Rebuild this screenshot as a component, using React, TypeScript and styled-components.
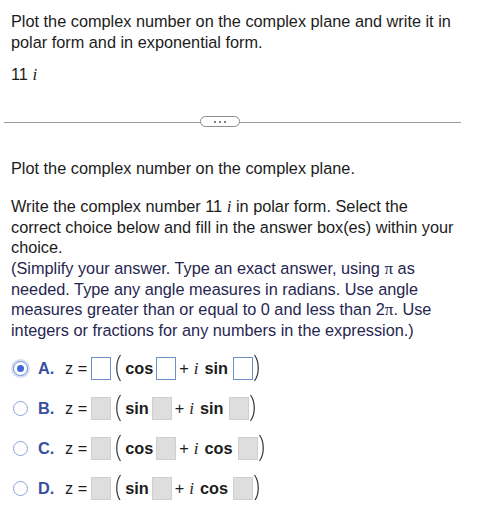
import React from "react";
import styled, { createGlobalStyle } from "styled-components";

const GlobalStyle = createGlobalStyle`
    body {
        margin: 0;
        background: #ffffff;
        font-family: "Liberation Sans", Arial, sans-serif;
        color: #1c1c1c;
    }
`;

const Page = styled.div`
    width: 457px;
    padding: 11px 0 0 4px;
`;

const Text = styled.p`
    margin: 0;
    padding-left: 7px;
    font-size: 16.3px;
    line-height: 20.6px;
`;

const Question = styled(Text)`
    line-height: 21px;
    margin-bottom: 11px;
`;

const Number = styled(Text)`
    margin-bottom: 31px;
`;

const Hint = styled(Text)`
    color: #262650;
`;

const Italic = styled.span`
    font-family: "Liberation Serif", "Times New Roman", serif;
    font-style: italic;
    font-size: 17px;
    line-height: 1;
`;

const Pi = styled.span`
    font-family: "Liberation Serif", "Times New Roman", serif;
    font-size: 17px;
    line-height: 1;
`;

const Divider = styled.div`
    position: relative;
    height: 12px;
    display: flex;
    align-items: center;
    justify-content: center;
    margin-bottom: 30px;
    &::before {
        content: "";
        position: absolute;
        left: 0;
        right: 0;
        top: 50%;
        border-top: 1px solid #9a9a9a;
    }
`;

const Pill = styled.div`
    position: relative;
    margin-left: -25px;
    width: 38px;
    height: 9px;
    border: 1px solid #8a8a8a;
    border-radius: 6px;
    background: #fff;
    display: flex;
    align-items: center;
    justify-content: center;
    gap: 3px;
`;

const Dot = styled.span`
    width: 2px;
    height: 2px;
    background: #555;
    border-radius: 50%;
`;

const Section = styled(Text)`
    margin-bottom: 18px;
`;

const Choices = styled.div`
    margin-top: 16px;
    padding-left: 9px;
    display: flex;
    flex-direction: column;
    gap: 16px;
`;

const Choice = styled.div`
    display: flex;
    align-items: center;
    height: 24px;
    font-size: 16.3px;
`;

const Radio = styled.span<{ $on?: boolean }>`
    box-sizing: border-box;
    width: 15px;
    height: 15px;
    border-radius: 50%;
    border: ${(p) => (p.$on ? "1.5px solid #6f8fd6" : "1.5px solid #8ea4d8")};
    box-shadow: ${(p) => (p.$on ? "0 0 0 2px #d5def3" : "none")};
    background: #fff;
    display: flex;
    align-items: center;
    justify-content: center;
    margin-right: 10px;
    &::after {
        content: "";
        display: ${(p) => (p.$on ? "block" : "none")};
        width: 7px;
        height: 7px;
        border-radius: 50%;
        background: #3f69d2;
    }
`;

const Letter = styled.span`
    font-weight: bold;
    color: #3a4e9e;
    width: 27px;
`;

const Eq = styled.span`
    margin-right: 4px;
`;

const Box = styled.span<{ $on?: boolean }>`
    box-sizing: border-box;
    display: inline-block;
    width: 20px;
    height: 23px;
    border: 1px solid ${(p) => (p.$on ? "#6f8fc9" : "#cfcfcf")};
    background: ${(p) => (p.$on ? "#fff" : "#dedede")};
`;

const Fn = styled.span<{ $gap?: number; $end?: number }>`
    font-weight: bold;
    margin: 0 ${(p) => p.$end ?? 3}px 0 ${(p) => p.$gap ?? 2}px;
`;

const Plus = styled.span`
    margin: 0 5px 0 3px;
`;

const Paren = styled.svg`
    width: 8px;
    height: 28px;
`;

const LeftParen = () => (
    <Paren viewBox="0 0 8 28" style={{ margin: "0 1px 0 3px" }}>
        <path d="M6.5 1 C1.5 8 1.5 20 6.5 27" stroke="#333" strokeWidth="1.2" fill="none" />
    </Paren>
);

const RightParen = () => (
    <Paren viewBox="0 0 8 28">
        <path d="M1.5 1 C6.5 8 6.5 20 1.5 27" stroke="#333" strokeWidth="1.2" fill="none" />
    </Paren>
);

const options = [
    { letter: "A", f1: "cos", f2: "sin", on: true },
    { letter: "B", f1: "sin", f2: "sin", on: false },
    { letter: "C", f1: "cos", f2: "cos", on: false },
    { letter: "D", f1: "sin", f2: "cos", on: false },
];

const App: React.FC = () => {
    return (
        <>
            <GlobalStyle />
            <Page>
                <Question>
                    Plot the complex number on the complex plane and write it in polar form and in exponential form.
                </Question>
                <Number>
                    11 <Italic>i</Italic>
                </Number>
                <Divider>
                    <Pill>
                        <Dot />
                        <Dot />
                        <Dot />
                    </Pill>
                </Divider>
                <Section>Plot the complex number on the complex plane.</Section>
                <Text>
                    Write the complex number 11 <Italic>i</Italic> in polar form. Select the correct choice below and
                    fill in the answer box(es) within your choice.
                </Text>
                <Hint>
                    (Simplify your answer. Type an exact answer, using <Pi>π</Pi> as needed. Type any angle measures in
                    radians. Use angle measures greater than or equal to 0 and less than 2<Pi>π</Pi>. Use integers or
                    fractions for any numbers in the expression.)
                </Hint>
                <Choices>
                    {options.map((o) => (
                        <Choice key={o.letter}>
                            <Radio $on={o.on} />
                            <Letter>{o.letter}.</Letter>
                            <Eq>z =</Eq>
                            <Box $on={o.on} />
                            <LeftParen />
                            <Fn>{o.f1}</Fn>
                            <Box $on={o.on} />
                            <Plus>+</Plus>
                            <Italic>i</Italic>
                            <Fn $gap={6} $end={5}>
                                {o.f2}
                            </Fn>
                            <Box $on={o.on} />
                            <RightParen />
                        </Choice>
                    ))}
                </Choices>
            </Page>
        </>
    );
};

export default App;
